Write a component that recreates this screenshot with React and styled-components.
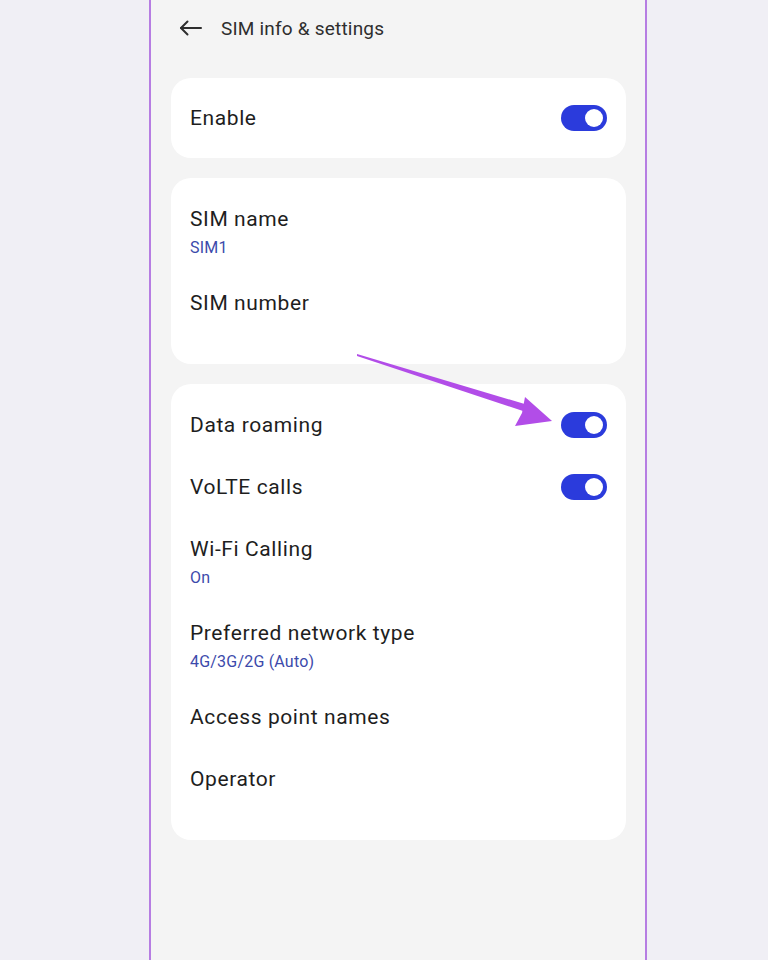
import React from 'react';
import styled, { createGlobalStyle } from 'styled-components';

const GlobalStyle = createGlobalStyle`
  html, body {
    margin: 0;
    padding: 0;
    background: #f0eff5;
    font-family: Roboto, "Noto Sans", "Liberation Sans", sans-serif;
  }
`;

const Page = styled.div`
  position: relative;
  width: 768px;
  height: 960px;
  overflow: hidden;
`;

const Phone = styled.div`
  box-sizing: border-box;
  margin-left: 149px;
  width: 498px;
  height: 960px;
  background: #f4f4f4;
  border-left: 2px solid #b67de2;
  border-right: 2px solid #b67de2;
  padding: 0 19px 0 20px;
  display: flex;
  flex-direction: column;
  gap: 20px;
`;

const Header = styled.div`
  height: 56px;
  display: flex;
  align-items: center;
  gap: 18px;
  padding-left: 8px;
  margin-bottom: 2px;
`;

const HeaderTitle = styled.div`
  font-size: 19px;
  color: #2e2e2e;
  letter-spacing: 0.2px;
`;

const Card = styled.div`
  background: #ffffff;
  border-radius: 20px;
  padding: ${p => (p.$compact ? '9px 0 9px' : '10px 0 30px')};
`;

const Row = styled.div`
  display: flex;
  align-items: center;
  justify-content: space-between;
  padding: ${p => (p.$sub ? '18px 19px 15px' : '18px 19px')};
`;

const Labels = styled.div`
  display: flex;
  flex-direction: column;
`;

const Title = styled.div`
  font-size: 21px;
  line-height: 26px;
  letter-spacing: 0.6px;
  color: #1e1e1e;
`;

const Sub = styled.div`
  font-size: 16px;
  line-height: 18px;
  letter-spacing: 0.2px;
  margin-top: 7px;
  color: #3c4aab;
`;

const Toggle = styled.div`
  position: relative;
  width: 46px;
  height: 26px;
  border-radius: 13px;
  background: #2b3bdc;
  flex-shrink: 0;

  &::after {
    content: '';
    position: absolute;
    top: 4px;
    right: 4px;
    width: 18px;
    height: 18px;
    border-radius: 50%;
    background: #ffffff;
  }
`;

const Annotation = styled.svg`
  position: absolute;
  left: 0;
  top: 0;
  pointer-events: none;
`;

const BackArrow = () => (
  <svg width="24" height="16" viewBox="0 0 24 16" fill="none" stroke="#2e2e2e" strokeWidth="2" strokeLinecap="round" strokeLinejoin="round">
    <path d="M22 8H2" />
    <path d="M8.5 1.5L2 8l6.5 6.5" />
  </svg>
);

const Setting = ({ title, sub, toggle }) => (
  <Row $sub={!!sub}>
    <Labels>
      <Title>{title}</Title>
      {sub && <Sub>{sub}</Sub>}
    </Labels>
    {toggle && <Toggle />}
  </Row>
);

const App = () => (
  <Page>
    <GlobalStyle />
    <Phone>
      <Header>
        <BackArrow />
        <HeaderTitle>SIM info &amp; settings</HeaderTitle>
      </Header>

      <Card $compact>
        <Setting title="Enable" toggle />
      </Card>

      <Card>
        <Setting title="SIM name" sub="SIM1" />
        <Setting title="SIM number" />
      </Card>

      <Card>
        <Setting title="Data roaming" toggle />
        <Setting title="VoLTE calls" toggle />
        <Setting title="Wi-Fi Calling" sub="On" />
        <Setting title="Preferred network type" sub="4G/3G/2G (Auto)" />
        <Setting title="Access point names" />
        <Setting title="Operator" />
      </Card>
    </Phone>

    <Annotation width="768" height="960" viewBox="0 0 768 960">
      <path d="M357 354 L528 405 L526 412 L357 356 Z" fill="#b24de8" />
      <path d="M525 397 L552 421 L515 426 L522 413 Z" fill="#b24de8" />
    </Annotation>
  </Page>
);

export default App;
